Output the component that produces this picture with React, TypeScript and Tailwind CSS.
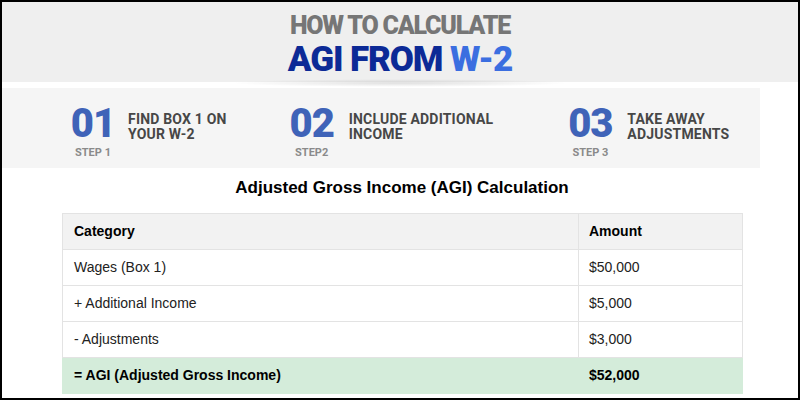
import React from "react";

const heading = { fontFamily: "Roboto, 'Noto Sans', sans-serif" };
const arial = { fontFamily: "'Liberation Sans', Arial, sans-serif" };

function Step({ num, label, lines, numW }: { num: string; label: string; lines: string[]; numW: string }) {
  return (
    <div className="flex items-start">
      <div className={`flex flex-col items-center ${numW}`}>
        <div className="text-[40px] leading-[34px] font-black text-[#3f63b8] tracking-[-1px]" style={heading}>
          {num}
        </div>
        <div className="mt-[6px] text-[11px] leading-[12px] font-bold text-[#8a8a8a]" style={heading}>
          {label}
        </div>
      </div>
      <div className="ml-[12px] mt-[5px] text-[14px] leading-[15px] font-bold text-[#474747] tracking-[0.2px]" style={heading}>
        {lines.map((l) => (
          <div key={l}>{l}</div>
        ))}
      </div>
    </div>
  );
}

export default function App() {
  const rows = [
    ["Wages (Box 1)", "$50,000"],
    ["+ Additional Income", "$5,000"],
    ["- Adjustments", "$3,000"],
  ];
  return (
    <div className="w-[800px] h-[400px] overflow-hidden bg-white border-2 border-black box-border flex flex-col">
      <div className="bg-[#efefef] h-[80px] flex flex-col items-center pt-[11px]">
        <div className="text-[25px] leading-[26px] font-black text-[#767676] tracking-[-1.2px]" style={heading}>
          HOW TO CALCULATE
        </div>
        <div className="mt-[3px] text-[35px] leading-[36px] font-black text-[#0c2a96] tracking-[-1.1px]" style={heading}>
          AGI FROM <span className="text-[#3b6ee0]">W-2</span>
        </div>
      </div>
      <div className="h-[6px] flex justify-center">
        <div className="w-[340px] h-[8px] -mt-[3px] bg-[radial-gradient(ellipse_at_center,rgba(0,0,0,0.12),rgba(0,0,0,0)_70%)]" />
      </div>
      <div className="bg-[#f5f5f5] h-[80px] w-[758px] flex items-start pt-[19px] pl-[68px]">
        <Step num="01" label="STEP 1" lines={["FIND BOX 1 ON", "YOUR W-2"]} numW="w-[46px]" />
        <div className="ml-[60px]">
          <Step num="02" label="STEP2" lines={["INCLUDE ADDITIONAL", "INCOME"]} numW="w-[50px]" />
        </div>
        <div className="ml-[72px]">
          <Step num="03" label="STEP 3" lines={["TAKE AWAY", "ADJUSTMENTS"]} numW="w-[50px]" />
        </div>
      </div>
      <div className="text-center text-[17px] leading-[20px] font-bold text-black mt-[10px] pl-[4px]" style={arial}>
        Adjusted Gross Income (AGI) Calculation
      </div>
      <div className="ml-[60px] mt-[15px] w-[681px]" style={arial}>
        <table className="w-full border-collapse text-[14px] text-[#222]">
          <tbody>
            <tr className="bg-[#f2f2f2] h-[36px]">
              <td className="border border-[#e3e3e3] pl-[11px] font-bold text-black">Category</td>
              <td className="border border-[#e3e3e3] pl-[10px] w-[164px] font-bold text-black">Amount</td>
            </tr>
            {rows.map(([a, b]) => (
              <tr key={a} className="h-[36px]">
                <td className="border border-[#e3e3e3] pl-[11px]">{a}</td>
                <td className="border border-[#e3e3e3] pl-[10px]">{b}</td>
              </tr>
            ))}
            <tr className="bg-[#d4ecda] h-[36px]">
              <td className="border border-[#d4ecda] pl-[11px] font-bold text-black">= AGI (Adjusted Gross Income)</td>
              <td className="border border-[#d4ecda] pl-[10px] font-bold text-black">$52,000</td>
            </tr>
          </tbody>
        </table>
      </div>
    </div>
  );
}
